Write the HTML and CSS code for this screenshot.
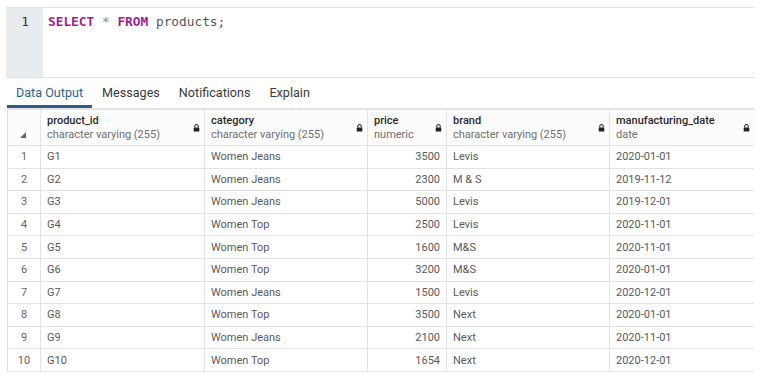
FILE: index.html
```html
<!DOCTYPE html>
<html lang="en">
<head>
	<meta charset="utf-8" />
	<title>Query Tool</title>
	<link rel="stylesheet" href="styles.css">
</head>
<body>
	<div id="wrapper">
		<div class="editor">
			<div class="gutter"><span>1</span></div>
			<div class="code"><span class="kw">SELECT</span> <span class="op">*</span> <span class="kw">FROM</span> products;</div>
		</div>

		<div class="tabs">
			<span class="tab active">Data Output</span>
			<span class="tab">Messages</span>
			<span class="tab">Notifications</span>
			<span class="tab">Explain</span>
		</div>

		<table class="grid">
			<colgroup>
				<col class="c-num"><col class="c-id"><col class="c-cat"><col class="c-price"><col class="c-brand"><col class="c-date">
			</colgroup>
			<thead>
				<tr>
					<th class="corner"><span class="sort"></span></th>
					<th><div class="hd"><div><b>product_id</b><i>character varying (255)</i></div><svg class="lock" viewBox="0 0 8 9"><path d="M2 4V2.6a2 2 0 0 1 4 0V4" fill="none" stroke="currentColor" stroke-width="1.2"/><rect x="0.8" y="4" width="6.4" height="4.6" rx="0.6"/></svg></div></th>
					<th><div class="hd"><div><b>category</b><i>character varying (255)</i></div><svg class="lock" viewBox="0 0 8 9"><path d="M2 4V2.6a2 2 0 0 1 4 0V4" fill="none" stroke="currentColor" stroke-width="1.2"/><rect x="0.8" y="4" width="6.4" height="4.6" rx="0.6"/></svg></div></th>
					<th><div class="hd"><div><b>price</b><i>numeric</i></div><svg class="lock" viewBox="0 0 8 9"><path d="M2 4V2.6a2 2 0 0 1 4 0V4" fill="none" stroke="currentColor" stroke-width="1.2"/><rect x="0.8" y="4" width="6.4" height="4.6" rx="0.6"/></svg></div></th>
					<th><div class="hd"><div><b>brand</b><i>character varying (255)</i></div><svg class="lock" viewBox="0 0 8 9"><path d="M2 4V2.6a2 2 0 0 1 4 0V4" fill="none" stroke="currentColor" stroke-width="1.2"/><rect x="0.8" y="4" width="6.4" height="4.6" rx="0.6"/></svg></div></th>
					<th><div class="hd"><div><b>manufacturing_date</b><i>date</i></div><svg class="lock" viewBox="0 0 8 9"><path d="M2 4V2.6a2 2 0 0 1 4 0V4" fill="none" stroke="currentColor" stroke-width="1.2"/><rect x="0.8" y="4" width="6.4" height="4.6" rx="0.6"/></svg></div></th>
				</tr>
			</thead>
			<tbody>
				<tr><td class="num">1</td><td>G1</td><td>Women Jeans</td><td class="r">3500</td><td>Levis</td><td>2020-01-01</td></tr>
				<tr><td class="num">2</td><td>G2</td><td>Women Jeans</td><td class="r">2300</td><td>M &amp; S</td><td>2019-11-12</td></tr>
				<tr><td class="num">3</td><td>G3</td><td>Women Jeans</td><td class="r">5000</td><td>Levis</td><td>2019-12-01</td></tr>
				<tr><td class="num">4</td><td>G4</td><td>Women Top</td><td class="r">2500</td><td>Levis</td><td>2020-11-01</td></tr>
				<tr><td class="num">5</td><td>G5</td><td>Women Top</td><td class="r">1600</td><td>M&amp;S</td><td>2020-11-01</td></tr>
				<tr><td class="num">6</td><td>G6</td><td>Women Top</td><td class="r">3200</td><td>M&amp;S</td><td>2020-01-01</td></tr>
				<tr><td class="num">7</td><td>G7</td><td>Women Jeans</td><td class="r">1500</td><td>Levis</td><td>2020-12-01</td></tr>
				<tr><td class="num">8</td><td>G8</td><td>Women Top</td><td class="r">3500</td><td>Next</td><td>2020-01-01</td></tr>
				<tr><td class="num">9</td><td>G9</td><td>Women Jeans</td><td class="r">2100</td><td>Next</td><td>2020-11-01</td></tr>
				<tr><td class="num">10</td><td>G10</td><td>Women Top</td><td class="r">1654</td><td>Next</td><td>2020-12-01</td></tr>
			</tbody>
		</table>
	</div>
</body>
</html>
```

FILE: styles.css
```css
body {margin:0; padding:0; font-family:Roboto,"Liberation Sans",sans-serif; color:#333; background:#fff; overflow:hidden;}

#wrapper {padding:7px 0 0 6px; width:749px;}

/* sql editor */
.editor {display:flex; height:69px; border-top:1px solid #e6e6e6; border-bottom:1px solid #e2e2e2; box-shadow:0 -1px 2px rgba(0,0,0,0.04);}
.gutter {width:37px; background:#e9ecef; text-align:center; padding-top:6px; font-family:"DejaVu Sans Mono",monospace; font-size:12.8px; color:#333; box-sizing:border-box; padding-left:1px;}
.code {padding:6px 0 0 5px; font-family:"DejaVu Sans Mono",monospace; font-size:12.8px; color:#555;}
.code .kw {color:#a3218a; font-weight:bold;}
.code .op {color:#888;}

/* result tabs */
.tabs {display:flex; height:26px; margin-top:4px; border-bottom:1px solid #e4e4e4;}
.tab {padding:3px 9px 0; font-size:12.6px; color:#3a3a3a; margin-right:1px;}
.tab.active {color:#2f5f8c; border-bottom:3px solid #2d5c86; margin-left:1px; height:20px;}

/* data grid */
.grid {border-collapse:collapse; table-layout:fixed; width:746px; margin-left:1px; font-size:11px;}
.c-num {width:33px;}
.c-id {width:164px;}
.c-cat {width:163px;}
.c-price {width:79px;}
.c-brand {width:163px;}
.c-date {width:144px;}

.grid th, .grid td {border:1px solid #e3e3e3; padding:0 6px; text-align:left; white-space:nowrap; overflow:hidden;}
.grid th {height:35px; background:#fcfcfc; font-weight:normal; vertical-align:middle;}
.grid td {height:21.6px; color:#5a5a5a;}
.grid td.num {text-align:center; color:#666; padding:0;}
.grid td.r {text-align:right;}
.grid tr > :last-child {border-right:none;}

.hd {display:flex; align-items:center; justify-content:space-between;}
.hd b {display:block; font-weight:500; color:#2a2a2a; line-height:14px;}
.hd i {display:block; font-style:normal; color:#707070; line-height:14px;}
.lock {width:7px; height:8px; fill:#222; color:#222; margin-right:-2px;}

.corner {position:relative;}
.sort {position:absolute; left:12px; bottom:7px; width:0; height:0; border-left:6px solid transparent; border-bottom:6px solid #666;}
```
